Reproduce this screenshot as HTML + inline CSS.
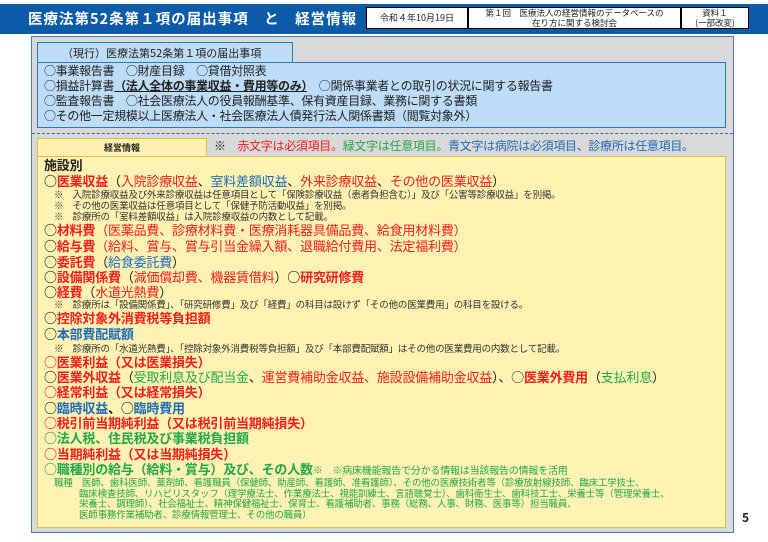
<!DOCTYPE html>
<html><head><meta charset="utf-8"><style>
*{margin:0;padding:0;box-sizing:border-box}
body{width:768px;height:542px;background:#fff;position:relative;overflow:hidden;font-family:"Noto Sans CJK JP","Liberation Sans",sans-serif;color:#222}
.abs{position:absolute;white-space:nowrap;line-height:1.2}
.r{color:#ff1e1e}.g{color:#22a84a}.b{color:#1f6cb8}.k{color:#222}
.main{font-size:13px;font-weight:bold;left:44px;letter-spacing:-0.2px}
.main .n{font-weight:normal}
.note{font-size:9.5px;left:54px;color:#333;letter-spacing:-0.2px}
.sm{font-size:12px;left:44px;letter-spacing:-0.3px}
</style></head><body>
<div class="abs" style="left:0;top:4px;width:768px;height:30px;background:#0b5ba8"></div>
<div class="abs" style="left:28px;top:10px;color:#fff;font-size:14.5px;font-weight:bold;letter-spacing:1px">医療法第52条第１項の届出事項　と　経営情報</div>
<div class="abs" style="left:366px;top:7px;width:102px;height:22px;background:#fff;border:1px solid #000;font-size:9px;text-align:center;line-height:20px">令和４年10月19日</div>
<div class="abs" style="left:468px;top:7px;width:213px;height:22px;background:#fff;border:1px solid #000;font-size:8.5px;text-align:center;line-height:10px">第１回　医療法人の経営情報のデータベースの<br>在り方に関する検討会</div>
<div class="abs" style="left:681px;top:7px;width:68px;height:22px;background:#fff;border:1px solid #000;font-size:8.5px;text-align:center;line-height:10px">資料１<br>(一部改変)</div>
<div class="abs" style="left:31px;top:36px;width:703px;height:497px;background:#d9d9d9;border:1px solid #4a7dbb"></div>
<div class="abs" style="left:37px;top:42px;width:256px;height:22px;background:#bddcf7;border:1px solid #2e75c4;border-bottom:none;font-size:11px;padding-left:24px;line-height:20px">（現行）医療法第52条第１項の届出事項</div>
<div class="abs" style="left:37px;top:62px;width:689px;height:66px;background:#bddcf7;border:1px solid #2e75c4"></div>
<div class="abs sm" style="top:64px">○事業報告書　○財産目録　○貸借対照表</div>
<div class="abs sm" style="top:79px">○損益計算書<b style="text-decoration:underline">（法人全体の事業収益・費用等のみ）</b>　○関係事業者との取引の状況に関する報告書</div>
<div class="abs sm" style="top:94px">○監査報告書　○社会医療法人の役員報酬基準、保有資産目録、業務に関する書類</div>
<div class="abs sm" style="top:109px">○その他一定規模以上医療法人・社会医療法人債発行法人関係書類（閲覧対象外）</div>
<div class="abs" style="left:32px;top:133px;width:701px;border-top:1px dashed #2e6db4"></div>
<div class="abs" style="left:37px;top:138px;width:170px;height:20px;background:#fff2b0;border:1px solid #e0c040;border-bottom:none;font-size:9px;font-weight:bold;text-align:center;line-height:18px">経営情報</div>
<div class="abs" style="left:214px;top:139px;font-size:12px;letter-spacing:-0.3px"><span class="k">※　</span><span class="r">赤文字は必須項目。</span><span class="g">緑文字は任意項目。</span><span class="b">青文字は病院は必須項目、診療所は任意項目。</span></div>
<div class="abs" style="left:37px;top:156px;width:689px;height:372px;background:#fff2b3;border:1px solid #e0c040"></div>
<div class="abs main k" style="top:157px">施設別</div>
<div class="abs main" style="top:173px">○<span class="r">医業収益</span><span class="n">（<span class="r">入院診療収益</span>、<span class="b">室料差額収益</span>、<span class="r">外来診療収益</span>、<span class="r">その他の医業収益</span>）</span></div>
<div class="abs note" style="top:189px">※　入院診療収益及び外来診療収益は任意項目として「保険診療収益（患者負担含む）」及び「公害等診療収益」を別掲。</div>
<div class="abs note" style="top:200px">※　その他の医業収益は任意項目として「保健予防活動収益」を別掲。</div>
<div class="abs note" style="top:211px">※　診療所の「室料差額収益」は入院診療収益の内数として記載。</div>
<div class="abs main" style="top:222px">○<span class="r">材料費</span><span class="n r">（医薬品費、診療材料費・医療消耗器具備品費、給食用材料費）</span></div>
<div class="abs main" style="top:238px">○<span class="r">給与費</span><span class="n r">（給料、賞与、賞与引当金繰入額、退職給付費用、法定福利費）</span></div>
<div class="abs main" style="top:254px">○<span class="r">委託費</span><span class="n">（<span class="b">給食委託費</span>）</span></div>
<div class="abs main" style="top:269px">○<span class="r">設備関係費</span><span class="n">（<span class="r">減価償却費、機器賃借料</span>）</span>○<span class="r">研究研修費</span></div>
<div class="abs main" style="top:284px">○<span class="r">経費</span><span class="n">（<span class="r">水道光熱費</span>）</span></div>
<div class="abs note" style="top:299px">※　診療所は「設備関係費」、「研究研修費」及び「経費」の科目は設けず「その他の医業費用」の科目を設ける。</div>
<div class="abs main" style="top:310px">○<span class="r">控除対象外消費税等負担額</span></div>
<div class="abs main" style="top:326px">○<span class="b">本部費配賦額</span></div>
<div class="abs note" style="top:343px">※　診療所の「水道光熱費」、「控除対象外消費税等負担額」及び「本部費配賦額」はその他の医業費用の内数として記載。</div>
<div class="abs main r" style="top:354px">○医業利益（又は医業損失）</div>
<div class="abs main" style="top:369px">○<span class="r">医業外収益</span><span class="n">（<span class="g">受取利息及び配当金</span>、<span class="r">運営費補助金収益、施設設備補助金収益</span>）、○</span><span class="r">医業外費用</span><span class="n">（<span class="g">支払利息</span>）</span></div>
<div class="abs main r" style="top:384px">○経常利益（又は経常損失）</div>
<div class="abs main" style="top:400px">○<span class="b">臨時収益</span>、○<span class="b">臨時費用</span></div>
<div class="abs main r" style="top:415px">○税引前当期純利益（又は税引前当期純損失）</div>
<div class="abs main g" style="top:430px">○法人税、住民税及び事業税負担額</div>
<div class="abs main r" style="top:446px">○当期純利益（又は当期純損失）</div>
<div class="abs main g" style="top:461px">○職種別の給与（給料・賞与）及び、その人数<span style="font-size:10px;font-weight:normal">※　※病床機能報告で分かる情報は当該報告の情報を活用</span></div>
<div class="abs g" style="left:54px;top:477px;font-size:9.5px;line-height:10.5px;letter-spacing:-0.2px">職種　医師、歯科医師、薬剤師、看護職員（保健師、助産師、看護師、准看護師）、その他の医療技術者等（診療放射線技師、臨床工学技士、<br><span style="padding-left:25px">臨床検査技師、リハビリスタッフ（理学療法士、作業療法士、視能訓練士、言語聴覚士）、歯科衛生士、歯科技工士、栄養士等（管理栄養士、</span><br><span style="padding-left:25px">栄養士、調理師）、社会福祉士、精神保健福祉士、保育士、看護補助者、事務（総務、人事、財務、医事等）担当職員、</span><br><span style="padding-left:25px">医師事務作業補助者、診療情報管理士、その他の職員）</span></div>
<div class="abs" style="left:742px;top:511px;font-size:12px;font-weight:bold;color:#222">5</div>
</body></html>
